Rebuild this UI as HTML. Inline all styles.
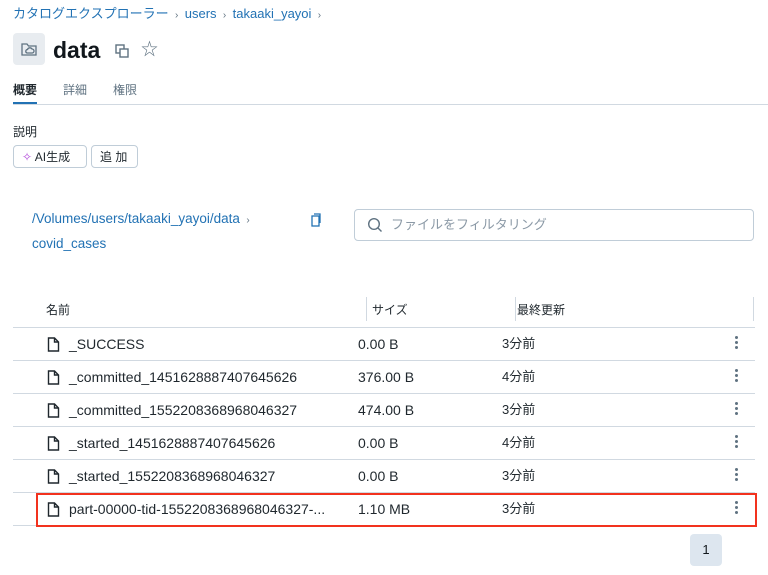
<!DOCTYPE html>
<html><head><meta charset="utf-8"><style>
*{margin:0;padding:0;box-sizing:border-box}
body{width:768px;height:575px;background:#fff;font-family:"Liberation Sans","Noto Sans CJK JP",sans-serif;color:#1f272d;position:relative;overflow:hidden;font-size:13px}
.a{position:absolute;white-space:nowrap;line-height:16px}
.blue{color:#2272b4}
.row{position:absolute;left:13px;width:742px;height:33px;border-bottom:1px solid #d1d9e1}
.row span{position:absolute;top:8px;font-size:14px;line-height:16px}
.fi{position:absolute;left:34px;top:9px}
.dots{position:absolute;left:722px;top:8px;width:4px}
.dots i{display:block;width:3px;height:3px;border-radius:50%;background:#5f7281;margin-bottom:2px}
</style></head><body>
<div class="a blue" style="left:13px;top:6px;font-size:13px">カタログエクスプローラー <span style="color:#5f7281;font-size:10px">&nbsp;›&nbsp;</span> users <span style="color:#5f7281;font-size:10px">&nbsp;›&nbsp;</span> takaaki_yayoi <span style="color:#5f7281;font-size:10px">&nbsp;›</span></div>
<div class="a" style="left:13px;top:33px;width:32px;height:32px;background:#e8ecf0;border-radius:4px"></div>
<svg class="a" style="left:20px;top:40px" width="18" height="18" viewBox="0 0 18 18" fill="none" stroke="#5f7281" stroke-width="1.3"><path d="M2 4h5l1.5 2H16v9H2z"/><path d="M7 13h5a2 2 0 0 0 0-4 2.5 2.5 0 0 0-4.5 0.5A1.8 1.8 0 0 0 7 13z"/></svg>
<div class="a" style="left:53px;top:38px;font-size:23px;line-height:24px;font-weight:bold;color:#11171c">data</div>
<svg class="a" style="left:114px;top:43px" width="16" height="16" viewBox="0 0 16 16" fill="none" stroke="#5f7281" stroke-width="1.4"><rect x="2" y="2" width="8" height="8"/><rect x="6" y="6" width="8" height="8" fill="#fff"/></svg>
<div class="a" style="left:141px;top:41px;font-size:17px;line-height:18px;color:#5f7281">☆</div>
<div class="a" style="left:13px;top:82px;font-size:12px;font-weight:bold">概要</div>
<div class="a" style="left:63px;top:82px;font-size:12px;color:#5f7281">詳細</div>
<div class="a" style="left:113px;top:82px;font-size:12px;color:#5f7281">権限</div>
<div class="a" style="left:13px;top:102px;width:24px;height:3px;background:#2272b4"></div>
<div class="a" style="left:13px;top:104px;width:755px;height:1px;background:#d1d9e1"></div>
<div class="a" style="left:13px;top:124px;font-size:12px">説明</div>
<div class="a" style="left:13px;top:145px;width:74px;height:23px;border:1px solid #c0cdd8;border-radius:4px;font-size:12px;padding:3px 0 0 8px"><span style="color:#b44ddb">✧</span> AI生成</div>
<div class="a" style="left:91px;top:145px;width:47px;height:23px;border:1px solid #c0cdd8;border-radius:4px;font-size:12px;padding:3px 0 0 8px">追 加</div>
<div class="a blue" style="left:32px;top:211px;font-size:13.5px">/Volumes/users/takaaki_yayoi/data <span style="color:#5f7281;font-size:10px">&nbsp;›</span></div>
<div class="a blue" style="left:32px;top:236px;font-size:13.5px">covid_cases</div>
<svg class="a" style="left:310px;top:213px" width="12" height="14" viewBox="0 0 12 14" fill="none" stroke="#2272b4" stroke-width="1.3"><rect x="2" y="3" width="7" height="10"/><path d="M4 1h6v9"/></svg>
<div class="a" style="left:354px;top:209px;width:400px;height:32px;border:1px solid #c0cdd8;border-radius:4px"></div>
<svg class="a" style="left:367px;top:217px" width="16" height="16" viewBox="0 0 16 16" fill="none" stroke="#5f7281" stroke-width="1.4"><circle cx="7" cy="7" r="5.3"/><path d="M11 11l3.5 3.5"/></svg>
<div class="a" style="left:391px;top:217px;font-size:13px;color:#8b99a6">ファイルをフィルタリング</div>
<div class="row" style="top:294px;height:34px"><span style="left:33px;top:8px;font-size:12px">名前</span><span style="left:359px;top:8px;font-size:12px">サイズ</span><span style="left:504px;top:8px;font-size:12px">最終更新</span></div>
<div class="a" style="left:366px;top:297px;width:1px;height:24px;background:#d1d9e1"></div>
<div class="a" style="left:515px;top:297px;width:1px;height:24px;background:#d1d9e1"></div>
<div class="a" style="left:753px;top:297px;width:1px;height:24px;background:#d1d9e1"></div>
<div class="row" style="top:328px"><svg class="fi" width="13" height="15" viewBox="0 0 13 15" fill="none" stroke="#1f272d" stroke-width="1.4"><path d="M1.5 1h6l4 4v9h-10z M7.5 1v4h4"/></svg><span style="left:56px">_SUCCESS</span><span style="left:345px">0.00 B</span><span style="left:489px;font-size:13px">3分前</span><div class="dots"><i></i><i></i><i></i></div></div>
<div class="row" style="top:361px"><svg class="fi" width="13" height="15" viewBox="0 0 13 15" fill="none" stroke="#1f272d" stroke-width="1.4"><path d="M1.5 1h6l4 4v9h-10z M7.5 1v4h4"/></svg><span style="left:56px">_committed_1451628887407645626</span><span style="left:345px">376.00 B</span><span style="left:489px;font-size:13px">4分前</span><div class="dots"><i></i><i></i><i></i></div></div>
<div class="row" style="top:394px"><svg class="fi" width="13" height="15" viewBox="0 0 13 15" fill="none" stroke="#1f272d" stroke-width="1.4"><path d="M1.5 1h6l4 4v9h-10z M7.5 1v4h4"/></svg><span style="left:56px">_committed_1552208368968046327</span><span style="left:345px">474.00 B</span><span style="left:489px;font-size:13px">3分前</span><div class="dots"><i></i><i></i><i></i></div></div>
<div class="row" style="top:427px"><svg class="fi" width="13" height="15" viewBox="0 0 13 15" fill="none" stroke="#1f272d" stroke-width="1.4"><path d="M1.5 1h6l4 4v9h-10z M7.5 1v4h4"/></svg><span style="left:56px">_started_1451628887407645626</span><span style="left:345px">0.00 B</span><span style="left:489px;font-size:13px">4分前</span><div class="dots"><i></i><i></i><i></i></div></div>
<div class="row" style="top:460px"><svg class="fi" width="13" height="15" viewBox="0 0 13 15" fill="none" stroke="#1f272d" stroke-width="1.4"><path d="M1.5 1h6l4 4v9h-10z M7.5 1v4h4"/></svg><span style="left:56px">_started_1552208368968046327</span><span style="left:345px">0.00 B</span><span style="left:489px;font-size:13px">3分前</span><div class="dots"><i></i><i></i><i></i></div></div>
<div class="row" style="top:493px"><svg class="fi" width="13" height="15" viewBox="0 0 13 15" fill="none" stroke="#1f272d" stroke-width="1.4"><path d="M1.5 1h6l4 4v9h-10z M7.5 1v4h4"/></svg><span style="left:56px">part-00000-tid-1552208368968046327-...</span><span style="left:345px">1.10 MB</span><span style="left:489px;font-size:13px">3分前</span><div class="dots"><i></i><i></i><i></i></div></div>
<div class="a" style="left:36px;top:493px;width:721px;height:34px;border:2px solid #f2321e"></div>
<div class="a" style="left:690px;top:534px;width:32px;height:32px;background:#dde6ef;border-radius:4px;font-size:13px;color:#11171c;text-align:center;line-height:32px">1</div>
</body></html>
